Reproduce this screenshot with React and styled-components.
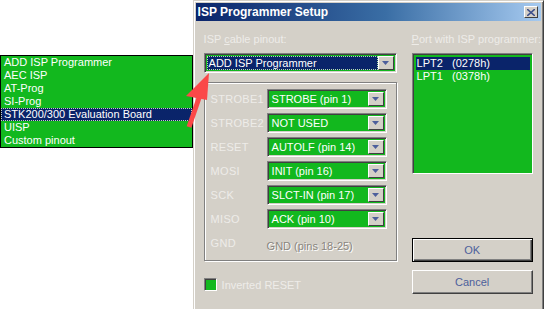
import styled, { createGlobalStyle } from "styled-components";

const GlobalStyle = createGlobalStyle`
  html, body {
    margin: 0;
    padding: 0;
    background: #ffffff;
  }
  body {
    font-family: "Liberation Sans", Arial, sans-serif;
    font-size: 11px;
  }
`;

const GREEN = "#12b81e";
const NAVY = "#0a246a";
const FACE = "#d4d0c8";

const pinRows = [
  { label: "STROBE1", value: "STROBE (pin 1)" },
  { label: "STROBE2", value: "NOT USED" },
  { label: "RESET", value: "AUTOLF (pin 14)" },
  { label: "MOSI", value: "INIT (pin 16)" },
  { label: "SCK", value: "SLCT-IN (pin 17)" },
  { label: "MISO", value: "ACK (pin 10)" },
];

const programmers = [
  "ADD ISP Programmer",
  "AEC ISP",
  "AT-Prog",
  "SI-Prog",
  "STK200/300 Evaluation Board",
  "UISP",
  "Custom pinout",
];

function DropArrow() {
  return (
    <svg width="7" height="4" viewBox="0 0 7 4">
      <polygon points="0,0 7,0 3.5,4" fill="#4d5f9c" />
    </svg>
  );
}

function Combo({ value, focused }) {
  return (
    <ComboBox>
      <ComboText $focused={focused}>{value}</ComboText>
      <DropButton>
        <DropArrow />
      </DropButton>
    </ComboBox>
  );
}

export default function App() {
  return (
    <Page>
      <GlobalStyle />
      <PopupList>
        {programmers.map((p, i) => (
          <PopupItem key={p} $selected={i === 4}>
            {p}
          </PopupItem>
        ))}
      </PopupList>

      <Pointer width="40" height="70" viewBox="0 0 40 70">
        <line x1="9" y1="61" x2="20" y2="29" stroke="#fb4848" strokeWidth="5" />
        <polygon points="29,7 6,30 27,34" fill="#fb4848" />
      </Pointer>

      <Dialog>
        <TitleBar>
          <Title>ISP Programmer Setup</Title>
          <CloseButton>
            <svg width="8" height="7" viewBox="0 0 8 7">
              <path d="M0 0 L8 7 M8 0 L0 7" stroke="#3d4f8a" strokeWidth="1.6" />
            </svg>
          </CloseButton>
        </TitleBar>

        <Body>
          <LeftColumn>
            <Caption>
              ISP <u>c</u>able pinout:
            </Caption>
            <Combo value="ADD ISP Programmer" focused />
            <GroupBox>
              {pinRows.map((r) => (
                <PinRow key={r.label}>
                  <PinLabel>{r.label}</PinLabel>
                  <Combo value={r.value} />
                </PinRow>
              ))}
              <PinRow>
                <PinLabel>GND</PinLabel>
                <DisabledText>GND (pins 18-25)</DisabledText>
              </PinRow>
            </GroupBox>
            <CheckRow>
              <CheckBox />
              <CheckLabel>Inverted RESET</CheckLabel>
            </CheckRow>
          </LeftColumn>

          <RightColumn>
            <Caption>
              <u>P</u>ort with ISP programmer:
            </Caption>
            <PortList>
              <PortItem $selected>{"LPT2   (0278h)"}</PortItem>
              <PortItem>{"LPT1   (0378h)"}</PortItem>
            </PortList>
            <ButtonStack>
              <Button $default>OK</Button>
              <Button>Cancel</Button>
            </ButtonStack>
          </RightColumn>
        </Body>
      </Dialog>
    </Page>
  );
}

const Page = styled.div`
  position: relative;
  display: flex;
  align-items: flex-start;
  width: 544px;
  height: 309px;
  overflow: hidden;
`;

const PopupList = styled.div`
  margin-top: 55px;
  width: 192px;
  background: ${GREEN};
  border: 1px solid #000;
  display: flex;
  flex-direction: column;
`;

const PopupItem = styled.div`
  height: 13px;
  line-height: 13px;
  padding-left: 3px;
  color: #fff;
  font-size: 11px;
  white-space: nowrap;
  background: ${(p) => (p.$selected ? NAVY : "transparent")};
  outline: ${(p) => (p.$selected ? "1px dotted #c8d0c0" : "none")};
  outline-offset: -1px;
`;

const Pointer = styled.svg`
  position: absolute;
  left: 180px;
  top: 66px;
`;

const Dialog = styled.div`
  width: 348px;
  height: 305px;
  background: ${FACE};
  border-left: 1px solid #d4d0c8;
  border-top: 1px solid #d4d0c8;
  border-right: 1px solid #404040;
  border-bottom: 1px solid #404040;
  box-shadow: inset 1px 1px #fff, inset -1px -1px #808080;
  padding: 2px;
  display: flex;
  flex-direction: column;
`;

const TitleBar = styled.div`
  height: 18px;
  display: flex;
  align-items: center;
  justify-content: space-between;
  padding: 0 3px 0 2px;
  background: linear-gradient(to right, ${NAVY} 0%, #3a6ea5 55%, #a6caf0 100%);
`;

const Title = styled.div`
  color: #fff;
  font-weight: bold;
  font-size: 12px;
`;

const CloseButton = styled.div`
  width: 14px;
  height: 12px;
  display: flex;
  align-items: center;
  justify-content: center;
  background: ${FACE};
  border: 1px solid;
  border-color: #fff #404040 #404040 #fff;
  box-sizing: border-box;
`;

const Body = styled.div`
  display: flex;
  padding: 11px 0 0 8px;
  gap: 15px;
`;

const LeftColumn = styled.div`
  width: 193px;
  display: flex;
  flex-direction: column;
`;

const RightColumn = styled.div`
  width: 121px;
  display: flex;
  flex-direction: column;
`;

const Caption = styled.div`
  color: #eeece8;
  font-size: 11px;
  height: 14px;
  line-height: 14px;
  margin-bottom: 7px;
  white-space: nowrap;
`;

const ComboBox = styled.div`
  width: 100%;
  height: 20px;
  box-sizing: border-box;
  display: flex;
  border: 1px solid;
  border-color: #808080 #fff #fff #808080;
  box-shadow: inset 1px 1px #404040, inset -1px -1px ${FACE};
  padding: 2px;
  background: ${GREEN};
`;

const ComboText = styled.div`
  flex: 1;
  color: #fff;
  font-size: 11px;
  line-height: 14px;
  padding-left: 2px;
  white-space: nowrap;
  overflow: hidden;
  background: ${(p) => (p.$focused ? NAVY : GREEN)};
  outline: ${(p) => (p.$focused ? "1px dotted #b9e0b0" : "none")};
  outline-offset: -1px;
`;

const DropButton = styled.div`
  width: 16px;
  height: 14px;
  box-sizing: border-box;
  display: flex;
  align-items: center;
  justify-content: center;
  background: ${FACE};
  border: 1px solid;
  border-color: #fff #404040 #404040 #fff;
`;

const GroupBox = styled.div`
  margin-top: 9px;
  height: 179px;
  box-sizing: border-box;
  border: 1px solid #808080;
  box-shadow: 1px 1px #fff, inset 1px 1px #fff;
  padding: 6px 8px 0 6px;
  display: flex;
  flex-direction: column;
  gap: 4px;
`;

const PinRow = styled.div`
  display: grid;
  grid-template-columns: 56px 120px;
  align-items: center;
  height: 20px;
`;

const PinLabel = styled.div`
  color: #eeece8;
  font-size: 11px;
  letter-spacing: 0.3px;
`;

const DisabledText = styled.div`
  color: #8a867f;
  font-size: 11px;
  text-shadow: 1px 1px #fff;
  margin-top: 6px;
`;

const CheckRow = styled.div`
  display: flex;
  align-items: center;
  gap: 5px;
  margin-top: 17px;
`;

const CheckBox = styled.div`
  width: 13px;
  height: 13px;
  box-sizing: border-box;
  background: ${GREEN};
  border: 1px solid;
  border-color: #808080 #fff #fff #808080;
  box-shadow: inset 1px 1px #404040;
`;

const CheckLabel = styled.div`
  color: #eeece8;
  font-size: 11px;
`;

const PortList = styled.div`
  height: 121px;
  box-sizing: border-box;
  background: ${GREEN};
  border: 1px solid;
  border-color: #808080 #fff #fff #808080;
  box-shadow: inset 1px 1px #404040;
  padding: 3px 2px 2px 3px;
  display: flex;
  flex-direction: column;
`;

const PortItem = styled.div`
  height: 13px;
  line-height: 13px;
  padding-left: 1px;
  color: #fff;
  font-size: 11px;
  white-space: pre;
  background: ${(p) => (p.$selected ? NAVY : "transparent")};
`;

const ButtonStack = styled.div`
  margin-top: 64px;
  display: flex;
  flex-direction: column;
  gap: 8px;
`;

const Button = styled.div`
  height: 24px;
  box-sizing: border-box;
  display: flex;
  align-items: center;
  justify-content: center;
  color: #4d5f9c;
  font-size: 11px;
  background: ${FACE};
  border: 1px solid ${(p) => (p.$default ? "#000" : "#fff")};
  ${(p) =>
    p.$default
      ? "box-shadow: inset 1px 1px #fff, inset -1px -1px #404040, inset -2px -2px #808080;"
      : "border-color: #fff #404040 #404040 #fff; box-shadow: inset -1px -1px #808080;"}
`;
